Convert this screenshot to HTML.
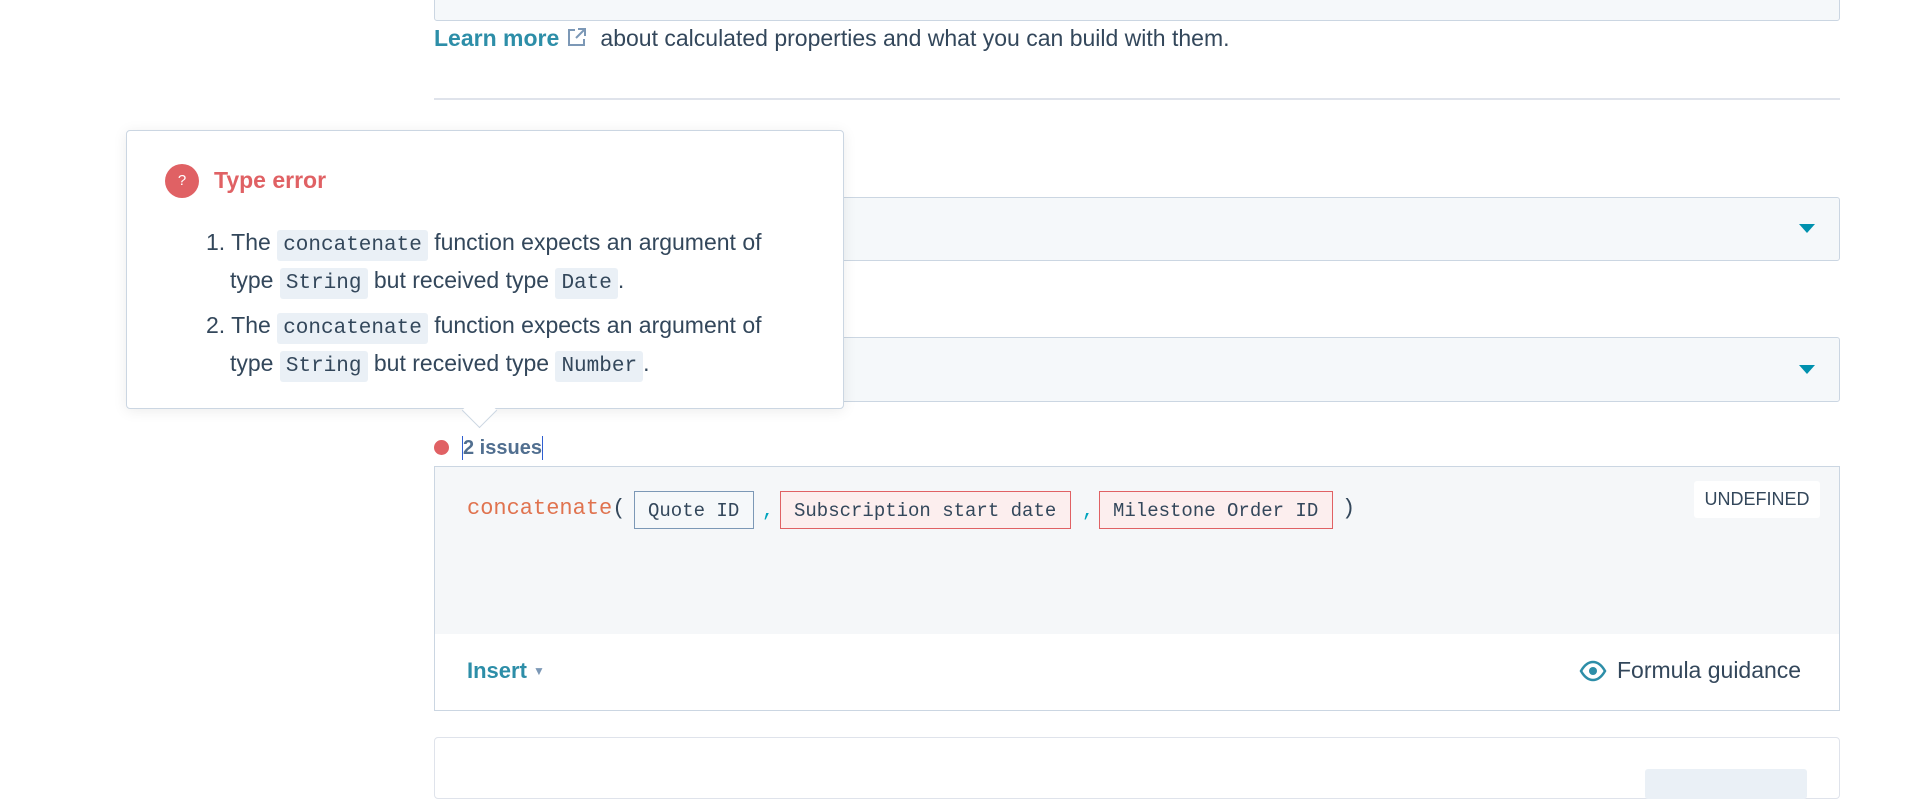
<!DOCTYPE html>
<html><head><meta charset="utf-8"><style>
body{margin:0;width:1916px;height:784px;background:#fff;position:relative;overflow:hidden;font-family:"Liberation Sans",sans-serif;color:#33475b}
.a{position:absolute}
.box{position:absolute;left:434px;width:1404px;border:1px solid #cbd6e2;background:#f5f8fa;border-radius:3px}
.caret{position:absolute;right:24px;width:0;height:0;border-left:8px solid transparent;border-right:8px solid transparent;border-top:9px solid #0091ae}
code{font-family:"Liberation Mono",monospace;font-size:21px;background:#eaf0f6;border-radius:3px;padding:4px 6px;color:#33475b}
.li{position:absolute;left:206px;font-size:23px;white-space:nowrap}
.chip{position:absolute;top:491px;height:38px;line-height:38px;font-family:"Liberation Mono",monospace;font-size:19px;padding:0 13px;box-sizing:border-box}
</style></head><body>
<div class="box" style="top:-4px;height:23px"></div>
<div class="a" style="left:434px;top:25px;font-size:23px;white-space:nowrap"><b style="color:#2d8ea8">Learn more</b> <svg width="22" height="22" viewBox="0 0 22 22" style="vertical-align:-2px"><path d="M9 4H3v15h15v-6M12 3h7v7M19 3l-9 9" fill="none" stroke="#7c98b6" stroke-width="2"/></svg> &nbsp;about calculated properties and what you can build with them.</div>
<div class="a" style="left:434px;top:98px;width:1406px;height:2px;background:#dfe3eb"></div>
<div class="box" style="top:197px;height:62px"><div class="caret" style="top:26px"></div></div>
<div class="box" style="top:337px;height:63px"><div class="caret" style="top:27px"></div></div>
<div class="a" style="left:126px;top:130px;width:716px;height:277px;background:#fff;border:1px solid #cbd6e2;border-radius:4px;box-shadow:0 2px 14px rgba(0,0,0,.08)"></div>
<div class="a" style="left:467px;top:398px;width:24px;height:24px;background:#fff;transform:rotate(45deg);border-right:1px solid #cbd6e2;border-bottom:1px solid #cbd6e2"></div>
<div class="a" style="left:165px;top:164px;width:34px;height:34px;border-radius:50%;background:#e06164;color:#fff;text-align:center;line-height:34px;font-size:15px">?</div>
<div class="a" style="left:214px;top:167px;font-size:23px;font-weight:bold;color:#e06164">Type error</div>
<div class="li" style="top:229px">1. The <code>concatenate</code> function expects an argument of</div>
<div class="li" style="top:267px;left:230px">type <code>String</code> but received type <code>Date</code>.</div>
<div class="li" style="top:312px">2. The <code>concatenate</code> function expects an argument of</div>
<div class="li" style="top:350px;left:230px">type <code>String</code> but received type <code>Number</code>.</div>
<div class="a" style="left:434px;top:440px;width:15px;height:15px;border-radius:50%;background:#e06164"></div>
<div class="a" style="left:462px;top:436px;font-size:20px;font-weight:bold;color:#516f90;border-left:1.5px solid #2f5fd0;border-right:1.5px solid #2f5fd0;height:24px;line-height:24px">2 issues</div>
<div class="a" style="left:434px;top:466px;width:1404px;height:167px;background:#f5f7f9;border:1px solid #cbd6e2"></div>
<div class="a" style="left:434px;top:634px;width:1404px;height:76px;background:#fff;border:1px solid #cbd6e2;border-top:none"></div>
<div class="a" style="left:467px;top:496px;font-family:'Liberation Mono',monospace;font-size:22px;color:#e0734f">concatenate<span style="color:#33475b">(</span></div>
<div class="chip" style="left:634px;width:120px;border:1.5px solid #7c98b6;background:#f5f8fa">Quote ID</div>
<div class="a" style="left:762px;top:500px;font-family:'Liberation Mono',monospace;font-size:20px;color:#00a4bd">,</div>
<div class="chip" style="left:780px;width:291px;border:1.5px solid #e06164;background:#fceeee">Subscription start date</div>
<div class="a" style="left:1082px;top:500px;font-family:'Liberation Mono',monospace;font-size:20px;color:#00a4bd">,</div>
<div class="chip" style="left:1099px;width:234px;border:1.5px solid #e06164;background:#fceeee">Milestone Order ID</div>
<div class="a" style="left:1342px;top:496px;font-family:'Liberation Mono',monospace;font-size:22px">)</div>
<div class="a" style="left:1694px;top:481px;width:126px;height:37px;background:#fff;border-radius:3px;font-size:18px;line-height:37px;text-align:center">UNDEFINED</div>
<div class="a" style="left:467px;top:658px;font-size:22px;font-weight:bold;color:#2d8ea8">Insert <span style="font-size:12px;color:#7c98b6;vertical-align:3px">▼</span></div>
<svg class="a" style="left:1579px;top:660px" width="28" height="22" viewBox="0 0 28 22"><path d="M2 11C6 4 10 2 14 2s8 2 12 9c-4 7-8 9-12 9S6 18 2 11z" fill="none" stroke="#2d8ea8" stroke-width="2.5"/><circle cx="14" cy="11" r="4" fill="#2d8ea8"/></svg>
<div class="a" style="left:1617px;top:657px;font-size:23px">Formula guidance</div>
<div class="a" style="left:434px;top:737px;width:1404px;height:60px;border:1px solid #dfe3eb;border-radius:4px;background:#fff"></div>
<div class="a" style="left:1645px;top:769px;width:162px;height:30px;background:#eaf0f6;border-radius:3px"></div>
</body></html>
